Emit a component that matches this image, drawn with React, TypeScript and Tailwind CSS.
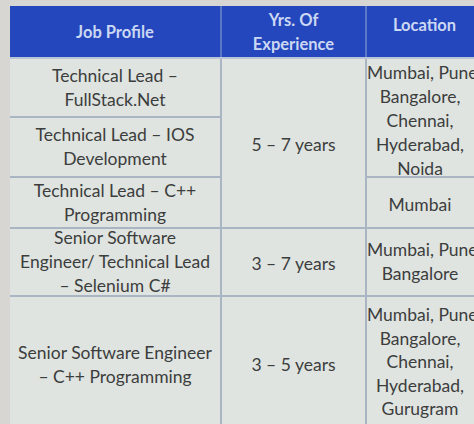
import React from "react";

const cell = "bg-[#dfe4e0] flex items-center justify-center text-center leading-[24px]";

export default function App() {
  return (
    <div className="w-[474px] h-[424px] overflow-hidden bg-[#d8d6d2] pt-[6px] pl-[10px] text-[17.5px] text-[#3c3d3d]" style={{ fontFamily: "Lato, 'Liberation Sans', sans-serif" }}>
      <div className="w-[470px]">
        <div className="grid grid-cols-[210px_143px_115px] gap-x-[2px] bg-[#5a77c8] h-[51px] font-bold text-[16.5px] text-[#cbd8f3]">
          <div className="bg-[#2547bd] flex items-center justify-center pt-[1px]">Job Profile</div>
          <div className="bg-[#2547bd] flex items-center justify-center text-center leading-[24px] pt-[1px]">Yrs. Of<br />Experience</div>
          <div className="bg-[#2547bd] flex justify-center pt-[7px]">Location</div>
        </div>
        <div className="grid grid-cols-[210px_143px_115px] grid-rows-[57px_58px_49px_66px_140px] gap-[2px] bg-[#a9b5c3] border-t-2 border-[#b9c4d6]">
          <div className={`${cell} col-start-1 row-start-1`}>Technical Lead –<br />FullStack.Net</div>
          <div className={`${cell} col-start-1 row-start-2`}>Technical Lead – IOS<br />Development</div>
          <div className={`${cell} col-start-1 row-start-3`}>Technical Lead – C++<br />Programming</div>
          <div className={`${cell} col-start-1 row-start-4`}>Senior Software<br />Engineer/ Technical Lead<br />– Selenium C#</div>
          <div className={`${cell} col-start-1 row-start-5 pb-[4px]`}>Senior Software Engineer<br />– C++ Programming</div>

          <div className={`${cell} col-start-2 row-start-1 row-span-3 pt-[4px]`}>5 – 7 years</div>
          <div className={`${cell} col-start-2 row-start-4 pt-[4px]`}>3 – 7 years</div>
          <div className={`${cell} col-start-2 row-start-5 pb-[4px]`}>3 – 5 years</div>

          <div className={`${cell} col-start-3 row-start-1 row-span-2 whitespace-nowrap pt-[6px] justify-start`}>
            <div className="w-[106px] text-center">Mumbai, Pune,<br />Bangalore,<br />Chennai,<br />Hyderabad,<br />Noida</div>
          </div>
          <div className={`${cell} col-start-3 row-start-3 justify-start`}>
            <div className="w-[106px] text-center pt-[4px]">Mumbai</div>
          </div>
          <div className={`${cell} col-start-3 row-start-4 whitespace-nowrap justify-start`}>
            <div className="w-[106px] text-center">Mumbai, Pune,<br />Bangalore</div>
          </div>
          <div className={`${cell} col-start-3 row-start-5 whitespace-nowrap justify-start`}>
            <div className="w-[106px] text-center leading-[23.5px] pb-[10px]">Mumbai, Pune,<br />Bangalore,<br />Chennai,<br />Hyderabad,<br />Gurugram</div>
          </div>
        </div>
      </div>
    </div>
  );
}
